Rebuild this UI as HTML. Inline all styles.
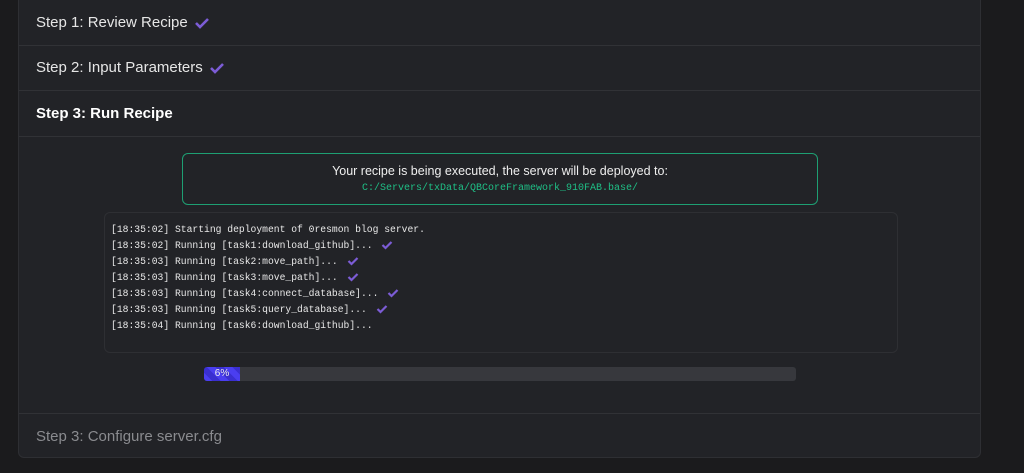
<!DOCTYPE html>
<html><head><style>
body{margin:0;width:1024px;height:473px;background:#1b1b1d;font-family:"Liberation Sans",sans-serif;overflow:hidden;position:relative}
.card{position:absolute;left:18px;top:-10px;width:963px;height:468px;background:#222327;border:1px solid #2e2f33;border-radius:6px;box-sizing:border-box}
.row{position:absolute;left:0;right:0;border-bottom:1px solid #313236;color:#e6e6e6;font-size:15px;padding-left:17px;box-sizing:border-box}
.chk{display:inline-block;vertical-align:middle;margin-left:6px}
.green{position:absolute;left:163px;top:162px;width:636px;height:52px;border:1px solid #1e9f73;border-radius:6px;box-sizing:border-box;text-align:center;color:#eee;font-size:12.5px}
.log{position:absolute;left:85px;top:221px;width:794px;height:141px;border:1px solid #2e2f33;border-radius:6px;box-sizing:border-box;padding:9px 6px;font-family:"Liberation Mono",monospace;font-size:9.7px;color:#e8e8e8;line-height:16px}
.log svg{vertical-align:middle;margin-left:3px}
.bar{position:absolute;left:185px;top:376px;width:592px;height:14px;background:#37383d;border-radius:3px;overflow:hidden}
.fill{width:36px;height:14px;background:repeating-linear-gradient(45deg,#4a3ef0 0 6px,#3a2fd0 6px 12px);color:#eee;font-size:10px;text-align:center;line-height:14px}
</style></head><body>
<div class="card">
<div class="row" style="top:10px;height:45px;line-height:44px">Step 1: Review Recipe<svg class="chk" width="16" height="12" viewBox="0 0 16 12"><path d="M2 6l4 4 8-8" stroke="#7c5cd6" stroke-width="2.6" fill="none"/></svg></div>
<div class="row" style="top:55px;height:45px;line-height:44px">Step 2: Input Parameters<svg class="chk" width="16" height="12" viewBox="0 0 16 12"><path d="M2 6l4 4 8-8" stroke="#7c5cd6" stroke-width="2.6" fill="none"/></svg></div>
<div class="row" style="top:100px;height:46px;line-height:45px;font-weight:bold;color:#fff">Step 3: Run Recipe</div>
<div class="green"><div style="margin-top:10px">Your recipe is being executed, the server will be deployed to:</div><div style="font-family:'Liberation Mono',monospace;font-size:10px;color:#1fbf86;margin-top:5px">C:/Servers/txData/QBCoreFramework_910FAB.base/</div></div>
<div class="log">
[18:35:02] Starting deployment of 0resmon blog server.<br>
[18:35:02] Running [task1:download_github]... <svg width="12" height="10" viewBox="0 0 12 10"><path d="M1.5 5l3 3 6-6" stroke="#7c5cd6" stroke-width="2.2" fill="none"/></svg><br>
[18:35:03] Running [task2:move_path]... <svg width="12" height="10" viewBox="0 0 12 10"><path d="M1.5 5l3 3 6-6" stroke="#7c5cd6" stroke-width="2.2" fill="none"/></svg><br>
[18:35:03] Running [task3:move_path]... <svg width="12" height="10" viewBox="0 0 12 10"><path d="M1.5 5l3 3 6-6" stroke="#7c5cd6" stroke-width="2.2" fill="none"/></svg><br>
[18:35:03] Running [task4:connect_database]... <svg width="12" height="10" viewBox="0 0 12 10"><path d="M1.5 5l3 3 6-6" stroke="#7c5cd6" stroke-width="2.2" fill="none"/></svg><br>
[18:35:03] Running [task5:query_database]... <svg width="12" height="10" viewBox="0 0 12 10"><path d="M1.5 5l3 3 6-6" stroke="#7c5cd6" stroke-width="2.2" fill="none"/></svg><br>
[18:35:04] Running [task6:download_github]...
</div>
<div class="bar"><div class="fill">6%</div></div>
<div class="row" style="top:422px;height:46px;line-height:46px;border-top:1px solid #313236;border-bottom:none;color:#8a8b8f">Step 3: Configure server.cfg</div>
</div>
</body></html>
